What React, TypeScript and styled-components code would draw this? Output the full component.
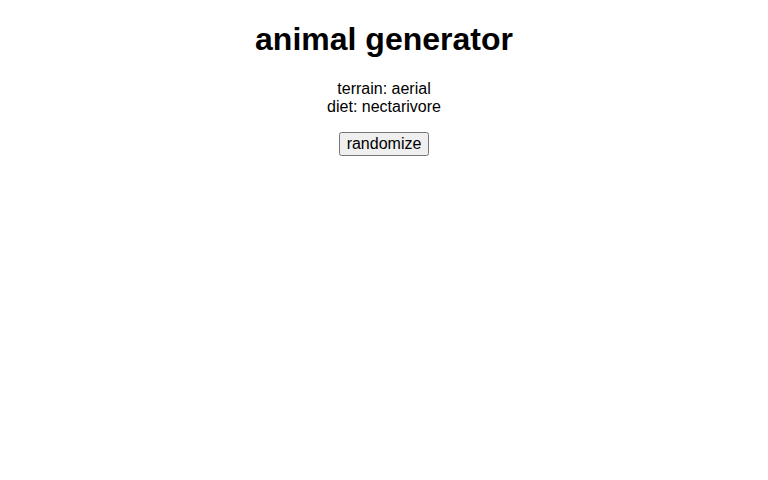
import { useState } from 'react'
import styled, { createGlobalStyle } from 'styled-components'

const GlobalStyle = createGlobalStyle`
  body {
    margin: 0;
    background: #fff;
    color: #000;
    font-family: "Liberation Sans", Arial, sans-serif;
  }
`

const Page = styled.main`
  display: flex;
  flex-direction: column;
  align-items: center;
  text-align: center;
`

const Title = styled.h1`
  margin: 21.44px 0;
  font-size: 32px;
  font-weight: 700;
`

const Traits = styled.p`
  margin: 0 0 16px;
  font-size: 16px;
  line-height: normal;
`

const RandomButton = styled.button`
  font-family: "Liberation Sans", Arial, sans-serif;
  font-size: 16px;
`

const terrains = ['aerial', 'aquatic', 'terrestrial', 'arboreal', 'subterranean']
const diets = ['nectarivore', 'carnivore', 'herbivore', 'omnivore', 'insectivore']

const pick = (list: string[]) => list[Math.floor(Math.random() * list.length)]

export default function App() {
  const [terrain, setTerrain] = useState('aerial')
  const [diet, setDiet] = useState('nectarivore')

  const randomize = () => {
    setTerrain(pick(terrains))
    setDiet(pick(diets))
  }

  return (
    <>
      <GlobalStyle />
      <Page>
        <Title>animal generator</Title>
        <Traits>
          terrain: {terrain}
          <br />
          diet: {diet}
        </Traits>
        <RandomButton onClick={randomize}>randomize</RandomButton>
      </Page>
    </>
  )
}
